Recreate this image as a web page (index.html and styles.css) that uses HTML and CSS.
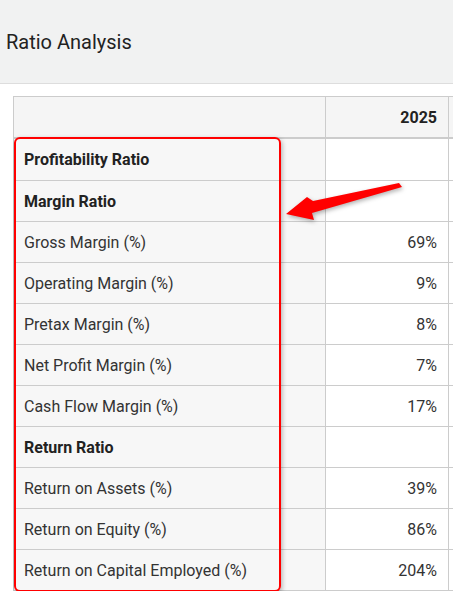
FILE: index.html
```html
<!DOCTYPE html>
<html lang="en">
<head>
    <meta charset="UTF-8">
    <meta name="viewport" content="width=device-width, initial-scale=1.0">
    <title>Ratio Analysis</title>
    <link rel="stylesheet" href="styles.css">
</head>
<body>
<div class="page-header">
    <h1>Ratio Analysis</h1>
</div>

<div class="table-wrap">
    <table class="ratios">
        <colgroup>
            <col class="col-label">
            <col class="col-year">
            <col class="col-next">
        </colgroup>
        <thead>
            <tr>
                <th class="label"></th>
                <th>2025</th>
                <th></th>
            </tr>
        </thead>
        <tbody>
            <tr class="section"><td class="label">Profitability Ratio</td><td></td><td></td></tr>
            <tr class="section"><td class="label">Margin Ratio</td><td></td><td></td></tr>
            <tr><td class="label">Gross Margin (%)</td><td>69%</td><td></td></tr>
            <tr><td class="label">Operating Margin (%)</td><td>9%</td><td></td></tr>
            <tr><td class="label">Pretax Margin (%)</td><td>8%</td><td></td></tr>
            <tr><td class="label">Net Profit Margin (%)</td><td>7%</td><td></td></tr>
            <tr><td class="label">Cash Flow Margin (%)</td><td>17%</td><td></td></tr>
            <tr class="section"><td class="label">Return Ratio</td><td></td><td></td></tr>
            <tr><td class="label">Return on Assets (%)</td><td>39%</td><td></td></tr>
            <tr><td class="label">Return on Equity (%)</td><td>86%</td><td></td></tr>
            <tr><td class="label">Return on Capital Employed (%)</td><td>204%</td><td></td></tr>
        </tbody>
    </table>

    <!-- annotation drawn over the table -->
    <div class="highlight"></div>
    <svg class="arrow" width="130" height="50" viewBox="0 0 130 50">
        <polygon points="118,3 121,7 31,33 33,40 5,34 26,17 32,21" fill="#ff0000"/>
    </svg>
</div>
</body>
</html>
```

FILE: styles.css
```css
body {
    margin: 0;
    font-family: Roboto, "Noto Sans", sans-serif;
    color: #333;
    background-color: #fff;
    overflow: hidden;
}

.page-header {
    height: 83px;
    background-color: #f1f2f2;
    border-bottom: 1px solid #ddd;
    display: flex;
    align-items: center;
    padding-left: 6px;
}

.page-header h1 {
    margin: 0;
    font-size: 20px;
    font-weight: 400;
    color: #222;
}

.table-wrap {
    position: relative;
    margin: 12px 0 0 13px;
    overflow: hidden;
}

.ratios {
    border-collapse: collapse;
    table-layout: fixed;
    width: 585px;
    font-size: 16px;
}

.col-label {
    width: 312px;
}

.col-year {
    width: 123px;
}

.col-next {
    width: 150px;
}

.ratios th,
.ratios td {
    border: 1px solid #ccc;
    height: 40px;
    padding: 0 11px;
    text-align: right;
    white-space: nowrap;
    background-color: #fff;
}

.ratios th {
    height: 40px;
    background-color: #f5f5f5;
    font-weight: 700;
    color: #222;
    border-bottom: 2px solid #ccc;
}

.ratios .label {
    text-align: left;
    padding-left: 10px;
    background-color: #f7f7f7;
}

.ratios th.label {
    background-color: #f5f5f5;
}

.ratios tbody tr:first-child td {
    height: 41px;
}

.section .label {
    font-weight: 700;
    color: #222;
}

.highlight {
    position: absolute;
    left: 1px;
    top: 41px;
    width: 263px;
    height: 451px;
    border: 2px solid #ff0000;
    border-radius: 6px;
    box-shadow: 1px 2px 5px rgba(0, 0, 0, 0.3);
}

.arrow {
    position: absolute;
    left: 268px;
    top: 84px;
    filter: drop-shadow(1px 2px 2px rgba(0, 0, 0, 0.3));
}
```
